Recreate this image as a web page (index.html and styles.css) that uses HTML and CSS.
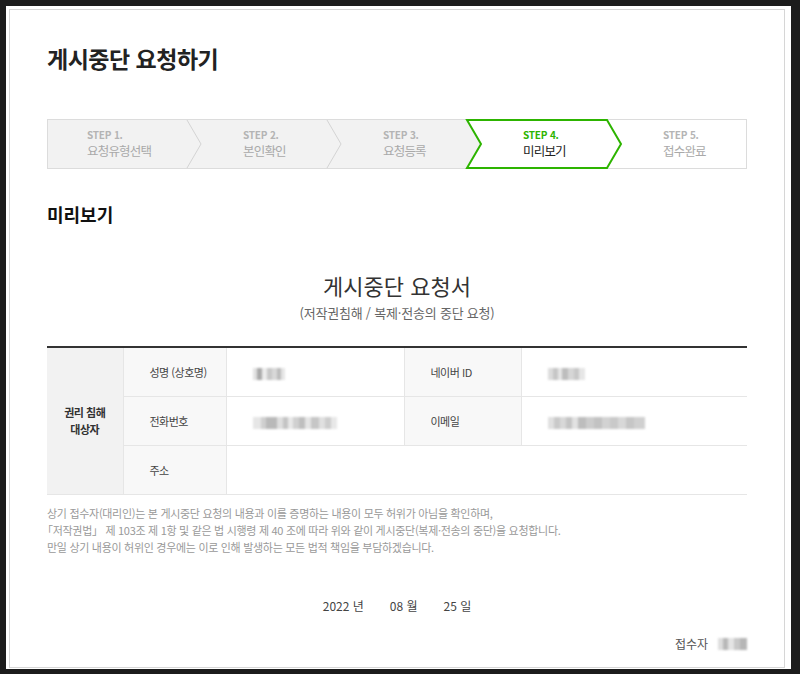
FILE: index.html
```html
<!DOCTYPE html>
<html lang="ko">
<head>
<meta charset="utf-8">
<title>게시중단 요청하기</title>
<link rel="stylesheet" href="styles.css">
</head>
<body>
<div class="frame">
  <div class="panel">
    <h1 class="page-title">게시중단 요청하기</h1>

    <div class="steps">
      <svg class="steps-bg" width="700" height="50" viewBox="0 0 700 50" aria-hidden="true">
        <rect x="0.5" y="0.5" width="699" height="49" fill="#ffffff" stroke="#dcdcdc"/>
        <polygon points="1,1 420,1 434,25 420,49 1,49" fill="#f2f2f2"/>
        <polyline points="140,1 154,25 140,49" fill="none" stroke="#d4d4d4" stroke-width="1"/>
        <polyline points="280,1 294,25 280,49" fill="none" stroke="#d4d4d4" stroke-width="1"/>
        <polygon points="420,1 560,1 574,25 560,49 420,49 434,25" fill="#ffffff" stroke="#2db400" stroke-width="2" stroke-linejoin="miter"/>
      </svg>
      <ol class="step-list">
        <li class="step step-first"><span class="step-num">STEP 1.</span><span class="step-name">요청유형선택</span></li>
        <li class="step"><span class="step-num">STEP 2.</span><span class="step-name">본인확인</span></li>
        <li class="step"><span class="step-num">STEP 3.</span><span class="step-name">요청등록</span></li>
        <li class="step step-active"><span class="step-num">STEP 4.</span><span class="step-name">미리보기</span></li>
        <li class="step"><span class="step-num">STEP 5.</span><span class="step-name">접수완료</span></li>
      </ol>
    </div>

    <h2 class="section-title">미리보기</h2>

    <div class="doc">
      <h3 class="doc-title">게시중단 요청서</h3>
      <p class="doc-sub">(저작권침해 / 복제·전송의 중단 요청)</p>

      <table class="info">
        <colgroup>
          <col class="c1"><col class="c2"><col class="c3"><col class="c4"><col class="c5">
        </colgroup>
        <tbody>
          <tr>
            <th class="group" rowspan="3">권리 침해<br>대상자</th>
            <th class="label">성명 (상호명)</th>
            <td class="value"><span class="mosaic m-name"></span></td>
            <th class="label">네이버 ID</th>
            <td class="value"><span class="mosaic m-id"></span></td>
          </tr>
          <tr>
            <th class="label">전화번호</th>
            <td class="value"><span class="mosaic m-phone"></span></td>
            <th class="label">이메일</th>
            <td class="value"><span class="mosaic m-email"></span></td>
          </tr>
          <tr>
            <th class="label">주소</th>
            <td class="value" colspan="3"></td>
          </tr>
        </tbody>
      </table>

      <p class="notice">상기 접수자(대리인)는 본 게시중단 요청의 내용과 이를 증명하는 내용이 모두 허위가 아님을 확인하며,<br><span class="br-open">「</span>저작권법」 제 103조 제 1항 및 같은 법 시행령 제 40 조에 따라 위와 같이 게시중단(복제·전송의 중단)을 요청합니다.<br>만일 상기 내용이 허위인 경우에는 이로 인해 발생하는 모든 법적 책임을 부담하겠습니다.</p>

      <p class="date"><span class="d-part">2022 년</span><span class="d-part">08 월</span><span class="d-part">25 일</span></p>

      <p class="sign"><span class="sign-label">접수자</span><span class="mosaic m-sign"></span></p>
    </div>
  </div>
</div>
</body>
</html>
```

FILE: styles.css
```css
* { box-sizing: border-box; }

html, body {
  margin: 0;
  padding: 0;
  background: #1c1c1c;
}

body {
  width: 800px;
  height: 674px;
  overflow: hidden;
  font-family: "Noto Sans CJK KR", "Noto Sans", sans-serif;
  color: #333;
}

.frame {
  margin: 6px 9px 0 6px;
  width: 785px;
  height: 663px;
  background: #ffffff;
  padding: 3px 6px 1px 3px;
}

.panel {
  height: 659px;
  border: 1px solid #d6d6d6;
  padding: 33px 37px 0 37px;
  overflow: hidden;
}

.page-title {
  margin: 0;
  font-size: 23px;
  line-height: 30px;
  font-weight: 700;
  color: #222;
  letter-spacing: -0.5px;
}

/* steps */
.steps {
  position: relative;
  margin-top: 46px;
  width: 700px;
  height: 50px;
}

.steps-bg {
  position: absolute;
  left: 0;
  top: 0;
  display: block;
}

.step-list {
  position: relative;
  list-style: none;
  margin: 0;
  padding: 0;
  display: flex;
  height: 50px;
}

.step {
  width: 140px;
  padding-left: 56px;
  display: flex;
  flex-direction: column;
  justify-content: center;
}

.step-first { padding-left: 40px; }

.step-num {
  font-size: 10px;
  line-height: 14px;
  font-weight: 700;
  color: #b4b4b4;
  letter-spacing: -0.2px;
}

.step-name {
  font-size: 12.5px;
  line-height: 18px;
  color: #a9a9a9;
  letter-spacing: -0.8px;
}

.step-active .step-num { color: #2db400; }
.step-active .step-name { color: #222; }

.section-title {
  margin: 32px 0 0 0;
  font-size: 18px;
  line-height: 26px;
  font-weight: 700;
  color: #111;
}

/* document */
.doc-title {
  margin: 43px 0 0 0;
  text-align: center;
  font-size: 22px;
  line-height: 30px;
  font-weight: 400;
  color: #333;
}

.doc-sub {
  margin: 3px 0 0 0;
  text-align: center;
  font-size: 13px;
  line-height: 20px;
  color: #666;
  letter-spacing: -0.2px;
}

.info {
  margin-top: 23px;
  width: 700px;
  border-collapse: collapse;
  table-layout: fixed;
  border-top: 2px solid #333;
  border-bottom: 1px solid #e6e6e6;
}

.c1 { width: 76px; }
.c2 { width: 103px; }
.c3 { width: 178px; }
.c4 { width: 117px; }
.c5 { width: 226px; }

.info th,
.info td {
  height: 49px;
  padding: 0 0 0 26px;
  border-bottom: 1px solid #e6e6e6;
  font-size: 11px;
  text-align: left;
  vertical-align: middle;
  letter-spacing: -0.5px;
}

.info .group {
  padding: 0;
  text-align: center;
  background: #f2f2f2;
  color: #333;
  font-weight: 700;
  line-height: 17px;
  border-right: 1px solid #e6e6e6;
}

.info .label {
  background: #f8f8f8;
  color: #444;
  font-weight: 400;
  border-right: 1px solid #e6e6e6;
}

.info .value {
  background: #fff;
  border-right: 1px solid #e6e6e6;
}

.info .value:last-child { border-right: 0; }

.mosaic {
  display: inline-block;
  vertical-align: middle;
  height: 12px;
  filter: blur(0.8px);
}

.m-name {
  width: 32px;
  background:
    linear-gradient(90deg, #e2e2e2 0 4px, #a9a9a9 4px 9px, #ececec 9px 14px, #c8c8c8 14px 19px, #d8d8d8 19px 24px, #bcbcbc 24px 28px, #e6e6e6 28px 32px);
}

.m-phone {
  width: 84px;
  background:
    linear-gradient(90deg, #e6e6e6 0 8px, #cfcfcf 8px 13px, #b9b9b9 13px 24px, #dedede 24px 30px, #c4c4c4 30px 35px, #e8e8e8 35px 40px, #d0d0d0 40px 46px, #bebebe 46px 52px, #e4e4e4 52px 58px, #c6c6c6 58px 66px, #e0e0e0 66px 72px, #cdcdcd 72px 78px, #e8e8e8 78px 84px);
}

.m-id {
  width: 37px;
  background:
    linear-gradient(90deg, #dcdcdc 0 5px, #c6c6c6 5px 10px, #e6e6e6 10px 14px, #bdbdbd 14px 20px, #d6d6d6 20px 26px, #c8c8c8 26px 31px, #e6e6e6 31px 37px);
}

.m-email {
  width: 97px;
  background:
    linear-gradient(90deg, #e0e0e0 0 6px, #c9c9c9 6px 12px, #d8d8d8 12px 18px, #c4c4c4 18px 24px, #e2e2e2 24px 30px, #bdbdbd 30px 38px, #cccccc 38px 46px, #c2c2c2 46px 54px, #d2d2d2 54px 62px, #c9c9c9 62px 70px, #d8d8d8 70px 78px, #c6c6c6 78px 86px, #d0d0d0 86px 97px);
}

.m-sign {
  width: 29px;
  background:
    linear-gradient(90deg, #dedede 0 5px, #b8b8b8 5px 10px, #e4e4e4 10px 16px, #c8c8c8 16px 22px, #b6b6b6 22px 29px);
}

.notice {
  margin: 10px 0 0 0;
  font-size: 11px;
  line-height: 17px;
  color: #999;
  letter-spacing: -0.3px;
}

.br-open { margin-left: -5px; }

.date {
  margin: 40px 0 0 0;
  text-align: center;
  font-size: 12px;
  line-height: 20px;
  color: #444;
}

.d-part { margin: 0 13px; }

.sign {
  margin: 17px 0 0 0;
  text-align: right;
  font-size: 12px;
  line-height: 20px;
  color: #555;
}

.sign-label {
  margin-right: 10px;
  vertical-align: middle;
}
```
